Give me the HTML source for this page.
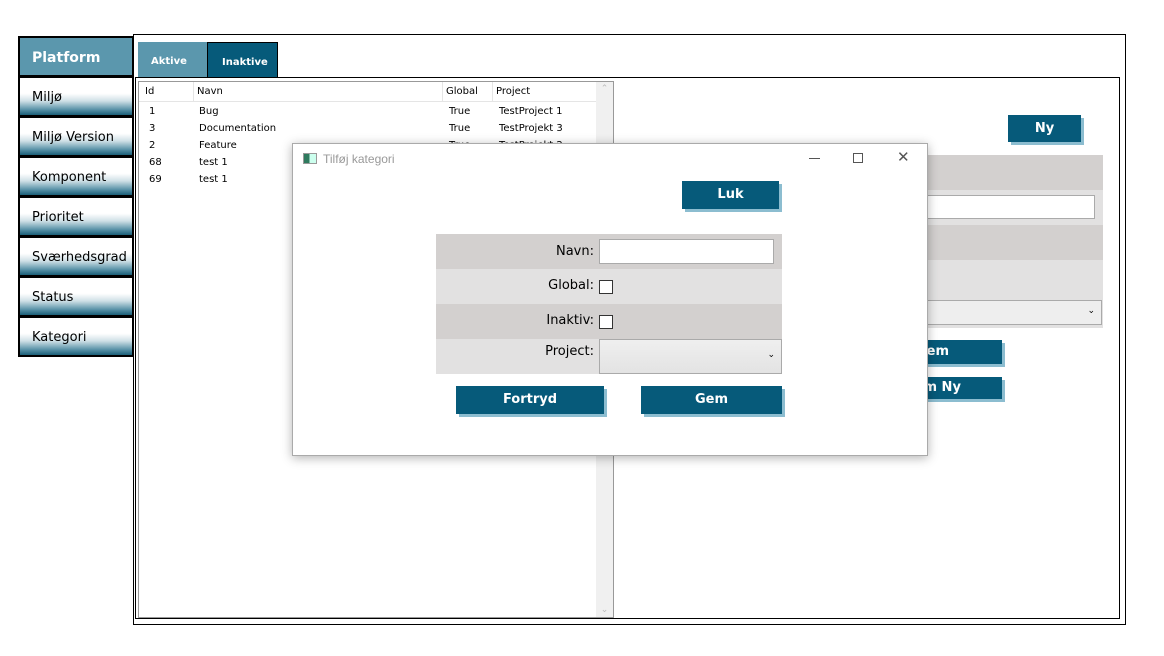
<!DOCTYPE html>
<html><head><meta charset="utf-8"><style>
*{box-sizing:border-box;margin:0;padding:0}
body{width:1164px;height:656px;background:#fff;position:relative;font-family:Tahoma,"DejaVu Sans","Liberation Sans",sans-serif;font-size:11px;color:#000;overflow:hidden}
.a{position:absolute}
.side{left:18px;width:116px;height:41px;border:2px solid #000;background:linear-gradient(#fff 0%,#fff 42%,#cfe0e6 62%,#5a93a8 85%,#1b5f78 100%);font-size:13px;padding:12px 0 0 12px}
.btn{background:#065a7a;color:#fff;font-weight:bold;font-size:13px;text-align:center;box-shadow:3px 3px 0 #8cbdd0}
.row{position:absolute;left:0;width:100%;height:35px}
.lbl{position:absolute;right:188px;font-size:13px;top:10px}
.cb{position:absolute;left:163px;width:14px;height:14px;border:1px solid #333;background:#fff}
</style></head><body>
<div class="a side" style="top:36px;background:#5b97ad;color:#fff;font-weight:bold;font-size:14px;padding-top:12px">Platform</div>
<div class="a side" style="top:76px">Miljø</div>
<div class="a side" style="top:116px">Miljø Version</div>
<div class="a side" style="top:156px">Komponent</div>
<div class="a side" style="top:196px">Prioritet</div>
<div class="a side" style="top:236px">Sværhedsgrad</div>
<div class="a side" style="top:276px">Status</div>
<div class="a side" style="top:316px">Kategori</div>

<div class="a" style="left:133px;top:34px;width:993px;height:591px;border:1px solid #000"></div>
<div class="a" style="left:138px;top:42px;width:70px;height:36px;background:#5b97ad;color:#fff;font-weight:bold;font-size:10px;padding:14px 0 0 13px">Aktive</div>
<div class="a" style="left:207px;top:42px;width:71px;height:36px;background:#065a7a;color:#fff;font-weight:bold;font-size:10px;padding:14px 0 0 14px;border:1px solid #000;border-bottom:none">Inaktive</div>
<div class="a" style="left:135px;top:77px;width:985px;height:542px;border:1px solid #000"></div>

<div class="a" style="left:138px;top:81px;width:476px;height:537px;border:1px solid #999;background:#fff">
 <div class="a" style="left:0;top:0;width:457px;height:20px;border-bottom:1px solid #e5e5e5;font-size:10px">
  <span class="a" style="left:6px;top:4px">Id</span>
  <span class="a" style="left:54px;top:0;height:19px;border-left:1px solid #e5e5e5;padding:4px 3px">Navn</span>
  <span class="a" style="left:303px;top:0;height:19px;border-left:1px solid #e5e5e5;padding:4px 3px">Global</span>
  <span class="a" style="left:353px;top:0;height:19px;border-left:1px solid #e5e5e5;padding:4px 3px">Project</span>
 </div>
 <div class="a" style="left:457px;top:0;width:17px;height:535px;background:#f0f0f0;color:#bbb;font-size:9px;text-align:center"><div style="padding-top:2px">⌃</div><div style="position:absolute;bottom:2px;width:17px">⌄</div></div>
 <div class="a" style="left:10px;top:21px;font-size:10px;line-height:17px">1<br>3<br>2<br>68<br>69</div>
 <div class="a" style="left:60px;top:21px;font-size:10px;line-height:17px">Bug<br>Documentation<br>Feature<br>test 1<br>test 1</div>
 <div class="a" style="left:310px;top:21px;font-size:10px;line-height:17px">True<br>True<br>True</div>
 <div class="a" style="left:360px;top:21px;font-size:10px;line-height:17px">TestProject 1<br>TestProjekt 3<br>TestProjekt 2</div>
</div>

<div class="a btn" style="left:1008px;top:115px;width:73px;height:27px;padding-top:6px">Ny</div>
<div class="a" style="left:620px;top:155px;width:483px;height:173px">
 <div class="row" style="top:0;background:#d3d0cf"></div>
 <div class="row" style="top:35px;background:#e2e1e1"></div>
 <div class="row" style="top:70px;background:#d3d0cf"></div>
 <div class="row" style="top:105px;background:#e2e1e1"></div>
 <div class="row" style="top:140px;background:#e2e1e1;height:33px"></div>
 <div class="a" style="left:300px;top:40px;width:175px;height:24px;background:#fff;border:1px solid #aaa"></div>
 <div class="a" style="left:300px;top:145px;width:182px;height:25px;background:#eee;border:1px solid #aaa;font-size:9px;text-align:right;padding:5px 6px">⌄</div>
</div>
<div class="a btn" style="left:880px;top:340px;width:122px;height:24px;padding:4px 0 0 36px;text-align:left">Gem</div>
<div class="a btn" style="left:880px;top:377px;width:122px;height:22px;padding:3px 0 0 24px;text-align:left">Gem Ny</div>

<div class="a" style="left:292px;top:143px;width:636px;height:313px;background:#fff;border:1px solid #aaa;box-shadow:0 2px 10px rgba(0,0,0,.3)">
 <div class="a" style="left:10px;top:9px;width:14px;height:11px;border:1px solid #999;background:linear-gradient(90deg,#2f7a5e 0 45%,#cfe 45%)"></div>
 <div class="a" style="left:30px;top:8px;font-family:'Liberation Sans',sans-serif;font-size:12px;color:#999">Tilføj kategori</div>
 <div class="a" style="left:516px;top:14px;width:11px;border-top:1px solid #555"></div>
 <div class="a" style="left:560px;top:9px;width:10px;height:10px;border:1px solid #555"></div>
 <div class="a" style="left:604px;top:4px;font-family:'DejaVu Sans',sans-serif;font-size:15px;color:#555;font-weight:200">✕</div>
 <div class="a btn" style="left:389px;top:37px;width:97px;height:28px;padding-top:6px">Luk</div>
 <div class="a" style="left:143px;top:90px;width:346px;height:140px">
  <div class="row" style="top:0;background:#d3d0cf"><span class="lbl">Navn:</span><div class="a" style="left:163px;top:5px;width:175px;height:25px;background:#fff;border:1px solid #aaa"></div></div>
  <div class="row" style="top:35px;background:#e2e1e1"><span class="lbl" style="top:9px">Global:</span><div class="cb" style="top:11px"></div></div>
  <div class="row" style="top:70px;background:#d3d0cf"><span class="lbl" style="top:9px">Inaktiv:</span><div class="cb" style="top:11px"></div></div>
  <div class="row" style="top:105px;background:#e2e1e1"><span class="lbl" style="top:5px">Project:</span><div class="a" style="left:163px;top:0;width:183px;height:35px;background:linear-gradient(#efefef,#e3e3e3);border:1px solid #aaa;font-size:9px;text-align:right;padding:10px 6px">⌄</div></div>
 </div>
 <div class="a btn" style="left:163px;top:242px;width:148px;height:28px;padding-top:6px">Fortryd</div>
 <div class="a btn" style="left:348px;top:242px;width:141px;height:28px;padding-top:6px">Gem</div>
</div>
</body></html>
